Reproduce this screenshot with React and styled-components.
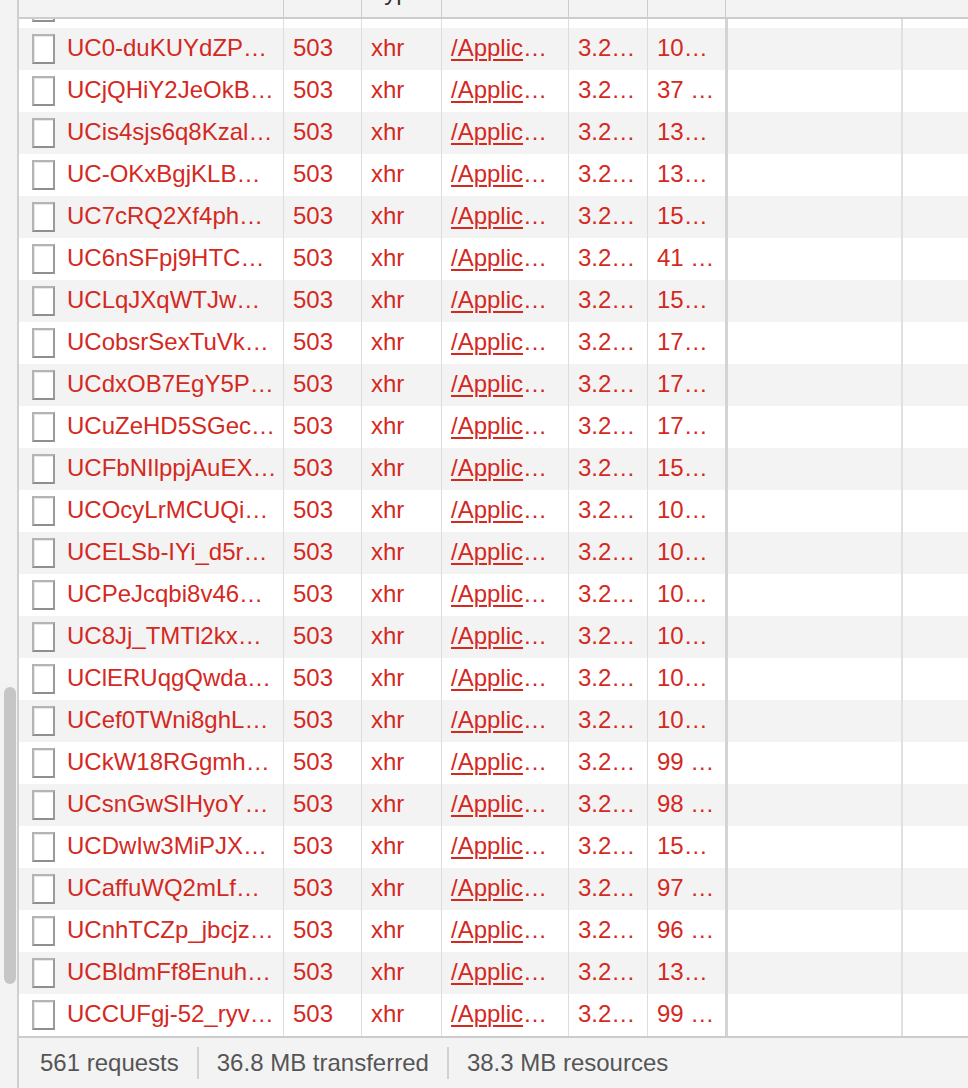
import React from 'react';
import styled, { createGlobalStyle } from 'styled-components';

const GlobalStyle = createGlobalStyle`
  html, body {
    margin: 0;
    padding: 0;
    background: #ffffff;
  }
  body {
    font-family: "Liberation Sans", Arial, Helvetica, sans-serif;
    -webkit-font-smoothing: antialiased;
  }
`;

const Page = styled.div`
  display: flex;
  width: 968px;
  height: 1088px;
  overflow: hidden;
`;

const SideStrip = styled.div`
  position: relative;
  flex: 0 0 17px;
  background: #f3f3f3;
  border-right: 2px solid #cfcfcf;
`;

const Thumb = styled.div`
  position: absolute;
  left: 4px;
  top: 687px;
  width: 12px;
  height: 297px;
  border-radius: 6px;
  background: #c6c6c6;
`;

const Panel = styled.div`
  flex: 1;
  display: flex;
  flex-direction: column;
  min-width: 0;
`;

const headCols = '265px 78px 80px 127px 79px 78px 1fr';
const bodyCols = '265px 78px 80px 127px 79px 80px 175px 1fr';

const Header = styled.div`
  flex: 0 0 17px;
  display: grid;
  grid-template-columns: ${headCols};
  background: #f3f3f3;
  border-bottom: 2px solid #cccccc;
  overflow: hidden;
`;

const HeadCell = styled.div`
  border-right: ${(p) => (p.$last ? 'none' : '1px solid #cccccc')};
  padding-left: ${(p) => p.$pad || 9}px;
  overflow: hidden;
`;

const HeadLabel = styled.div`
  margin-top: -20px;
  font-size: 24px;
  line-height: 24px;
  color: #333333;
  white-space: nowrap;
`;

const Body = styled.div`
  flex: 1;
  overflow: hidden;
  background: #ffffff;
`;

// list is scrolled: only the bottom of the row above the first one shows
const Rows = styled.div`
  margin-top: -33px;
`;

const Row = styled.div`
  display: grid;
  grid-template-columns: ${bodyCols};
  height: 42px;
  background: ${(p) => (p.$shade ? '#f3f3f3' : '#ffffff')};
`;

const Cell = styled.div`
  display: flex;
  align-items: center;
  padding: 0 0 3px ${(p) => p.$pad || 9}px;
  border-right: ${(p) => p.$border || '1px solid #dedede'};
  font-size: 24px;
  color: #d4291f;
  white-space: nowrap;
  overflow: hidden;
`;

const DocIcon = styled.span`
  flex: 0 0 auto;
  box-sizing: border-box;
  width: 23px;
  height: 30px;
  margin: 3px 12px 0 0;
  background: #ffffff;
  border: 2px solid #b4b4b4;
  border-right-color: #9a9a9a;
  border-bottom-color: #8f8f8f;
  box-shadow: inset 1px 1px 0 #e8e8e8;
`;

const Link = styled.span`
  text-decoration: underline;
  text-decoration-thickness: 2px;
  text-underline-offset: 3px;
`;

const Footer = styled.div`
  flex: 0 0 50px;
  display: flex;
  align-items: center;
  padding-left: 3px;
  background: #f3f3f3;
  border-top: 2px solid #cccccc;
`;

const FootItem = styled.div`
  padding: 0 18px;
  font-size: 24px;
  line-height: 32px;
  color: #555555;
  white-space: nowrap;
  border-left: ${(p) => (p.$first ? 'none' : '2px solid #d2d2d2')};
`;

const rows = [
  ['UC0-duKUYdZP…', '10…'],
  ['UCjQHiY2JeOkB…', '37 …'],
  ['UCis4sjs6q8Kzal…', '13…'],
  ['UC-OKxBgjKLB…', '13…'],
  ['UC7cRQ2Xf4ph…', '15…'],
  ['UC6nSFpj9HTC…', '41 …'],
  ['UCLqJXqWTJw…', '15…'],
  ['UCobsrSexTuVk…', '17…'],
  ['UCdxOB7EgY5P…', '17…'],
  ['UCuZeHD5SGec…', '17…'],
  ['UCFbNIlppjAuEX…', '15…'],
  ['UCOcyLrMCUQi…', '10…'],
  ['UCELSb-IYi_d5r…', '10…'],
  ['UCPeJcqbi8v46…', '10…'],
  ['UC8Jj_TMTl2kx…', '10…'],
  ['UClERUqgQwda…', '10…'],
  ['UCef0TWni8ghL…', '10…'],
  ['UCkW18RGgmh…', '99 …'],
  ['UCsnGwSIHyoY…', '98 …'],
  ['UCDwIw3MiPJX…', '15…'],
  ['UCaffuWQ2mLf…', '97 …'],
  ['UCnhTCZp_jbcjz…', '96 …'],
  ['UCBldmFf8Enuh…', '13…'],
  ['UCCUFgj-52_ryv…', '99 …'],
];

const heads = ['Name', 'Status', 'Type', 'Initiator', 'Size', 'Time', 'Waterfall'];

const RequestRow = ({ name, time, shade }) => (
  <Row $shade={shade}>
    <Cell $pad={13}>
      <DocIcon />
      {name}
    </Cell>
    <Cell>{name && '503'}</Cell>
    <Cell>{name && 'xhr'}</Cell>
    <Cell>
      {name && (
        <>
          <Link>/Applic</Link>…
        </>
      )}
    </Cell>
    <Cell>{name && '3.2…'}</Cell>
    <Cell $border="3px solid #d4d4d4">{time}</Cell>
    <Cell $border="2px solid #e0e0e0" />
    <Cell $border="none" />
  </Row>
);

export default function App() {
  return (
    <>
      <GlobalStyle />
      <Page>
        <SideStrip>
          <Thumb />
        </SideStrip>
        <Panel>
          <Header>
            {heads.map((h, i) => (
              <HeadCell key={h} $pad={i === 0 ? 14 : 9} $last={i === heads.length - 1}>
                <HeadLabel>{h}</HeadLabel>
              </HeadCell>
            ))}
          </Header>
          <Body>
            <Rows>
              <RequestRow name="" time="" shade={false} />
              {rows.map(([name, time], i) => (
                <RequestRow key={name} name={name} time={time} shade={i % 2 === 0} />
              ))}
            </Rows>
          </Body>
          <Footer>
            <FootItem $first>561 requests</FootItem>
            <FootItem>36.8 MB transferred</FootItem>
            <FootItem>38.3 MB resources</FootItem>
          </Footer>
        </Panel>
      </Page>
    </>
  );
}
